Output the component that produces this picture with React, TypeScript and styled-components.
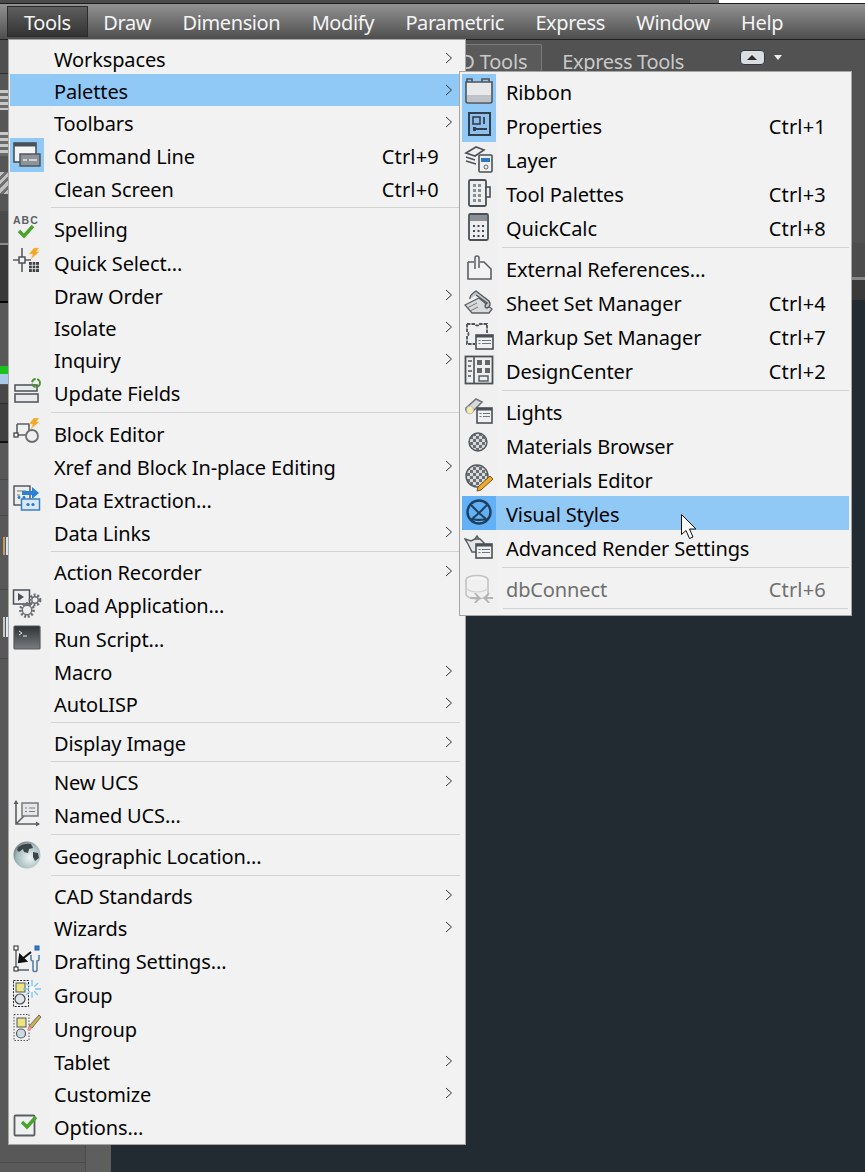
import React from 'react';
import styled, { createGlobalStyle } from 'styled-components';

const Global = createGlobalStyle`
  html, body { margin: 0; padding: 0; background: #222a32; }
  body { font-family: "Noto Sans", "Open Sans", sans-serif; overflow: hidden; }
`;

const Stroke = '#4b5056';

const Svg = ({ children }: { children: React.ReactNode }) => (
  <svg width="30" height="30" viewBox="0 0 30 30" fill="none">{children}</svg>
);

const ListBox = ({ x, y, w = 15, h = 12 }: { x: number; y: number; w?: number; h?: number }) => (
  <g>
    <rect x={x} y={y} width={w} height={h} fill="#eef0f2" stroke={Stroke} strokeWidth="1.6" />
    <rect x={x} y={y} width={w} height="2.5" fill={Stroke} />
    <path d={`M${x + 2.5} ${y + 5.5}h2M${x + 2.5} ${y + 8.5}h2M${x + 6} ${y + 5.5}h${w - 8}M${x + 6} ${y + 8.5}h${w - 8}`} stroke="#6f757b" strokeWidth="1.2" />
  </g>
);

const Bolt = ({ x, y }: { x: number; y: number }) => (
  <path transform={`translate(${x} ${y})`} d="M5 0h5L7 4h3L2 11l2-5H0z" fill="#f5a623" stroke="#f8c878" strokeWidth=".5" />
);

const Check = ({ x, y }: { x: number; y: number }) => (
  <path transform={`translate(${x} ${y})`} d="M1 6l5 5L15 1" stroke="#4aa32a" strokeWidth="3.4" strokeLinejoin="miter" />
);

const Checker = ({ id, cx, cy, r }: { id: string; cx: number; cy: number; r: number }) => (
  <g>
    <defs>
      <pattern id={id} width="6" height="6" patternUnits="userSpaceOnUse">
        <rect width="6" height="6" fill="#d8dadc" />
        <rect width="3" height="3" fill="#6a6f74" />
        <rect x="3" y="3" width="3" height="3" fill="#6a6f74" />
      </pattern>
    </defs>
    <circle cx={cx} cy={cy} r={r} fill={`url(#${id})`} stroke="#55595e" strokeWidth="1.4" />
  </g>
);

const Gear = ({ cx, cy, r }: { cx: number; cy: number; r: number }) => (
  <g>
    <circle cx={cx} cy={cy} r={r} stroke="#6b6f74" strokeWidth="2.8" strokeDasharray="2 1.6" />
    <circle cx={cx} cy={cy} r={r - 1.8} stroke="#6b6f74" strokeWidth="1.4" />
  </g>
);

const icons: Record<string, React.ReactNode> = {
  command: (
    <Svg>
      <rect x="2" y="3" width="22" height="19" fill="#f2f4f6" stroke={Stroke} strokeWidth="1.6" />
      <rect x="2" y="3" width="22" height="3.5" fill={Stroke} />
      <rect x="8" y="14" width="20" height="12" fill="#8d9399" stroke={Stroke} strokeWidth="1.4" />
      <path d="M11 20h4M17 20h8" stroke="#e8eaec" strokeWidth="1.6" />
    </Svg>
  ),
  spelling: (
    <Svg>
      <text x="1" y="11" fontFamily="Liberation Sans, sans-serif" fontWeight="700" fontSize="10.5" letterSpacing="1" fill="#5d6166">ABC</text>
      <Check x={6} y={12} />
    </Svg>
  ),
  quick: (
    <Svg>
      <path d="M10 1v24M1 13h18" stroke="#5a5e63" strokeWidth="1.6" />
      <rect x="7" y="10" width="6" height="6" fill="#f0f0f0" stroke="#44484c" strokeWidth="1.4" />
      <Bolt x={17} y={1} />
      <rect x="17" y="15" width="10" height="10" fill="#3d4044" />
      <path d="M20.3 15v10M23.6 15v10M17 18.3h10M17 21.6h10" stroke="#eee" strokeWidth=".8" />
    </Svg>
  ),
  update: (
    <Svg>
      <rect x="3" y="8" width="22" height="6" fill="#e8eaec" stroke="#55595e" strokeWidth="1.6" />
      <rect x="3" y="17" width="23" height="8" fill="#e8eaec" stroke="#55595e" strokeWidth="1.6" />
      <circle cx="24" cy="6" r="4" stroke="#46932e" strokeWidth="1.8" strokeDasharray="5 1.5" />
    </Svg>
  ),
  block: (
    <Svg>
      <path d="M5 6h12v11H4" stroke="#5a5e63" strokeWidth="1.6" />
      <path d="M5 6v10" stroke="#5a5e63" strokeWidth="1.6" />
      <rect x="2" y="15" width="4" height="4" fill="#fff" stroke="#333" strokeWidth="1.2" />
      <circle cx="20" cy="18" r="6" fill="#eee" stroke="#6b6f74" strokeWidth="1.8" />
      <Bolt x={17} y={0} />
    </Svg>
  ),
  extract: (
    <Svg>
      <rect x="2" y="2" width="16" height="19" fill="#eceef0" stroke={Stroke} strokeWidth="1.4" />
      <path d="M5 7h9M5 11h3" stroke="#9ba0a5" strokeWidth="1.6" />
      <circle cx="7" cy="13.5" r="1.4" fill="#2a78c8" /><circle cx="12" cy="13.5" r="1.4" fill="#2a78c8" />
      <path d="M10 7h10V3l7 6-7 6v-4H10z" fill="#2a82d8" />
      <rect x="9.5" y="15" width="18" height="11" fill="#d8e8f6" stroke="#3a80c4" strokeWidth="1.5" />
      <circle cx="16" cy="20.5" r="1.6" fill="#2a78c8" /><circle cx="21" cy="20.5" r="1.6" fill="#2a78c8" />
    </Svg>
  ),
  load: (
    <Svg>
      <rect x="1.500" y="1" width="16" height="14" fill="#eceef0" stroke={Stroke} strokeWidth="1.5" />
      <path d="M6 4l6 4-6 4z" fill={Stroke} />
      <Gear cx={23} cy={11} r={5} />
      <Gear cx={15} cy={21} r={6.500} />
    </Svg>
  ),
  script: (
    <svg width="30" height="30" viewBox="0 0 30 30" fill="none">
      <defs>
        <linearGradient id="termGrad" x1="0" y1="0" x2="0" y2="1">
          <stop offset="0" stopColor="#2e3134" /><stop offset="1" stopColor="#7a7d80" />
        </linearGradient>
      </defs>
      <rect x="2" y="3" width="26" height="23" rx="1" fill="url(#termGrad)" stroke="#54585c" strokeWidth="1.2" />
      <path d="M7 8l3 2-3 2M11 13h4" stroke="#e8e8e8" strokeWidth="1" />
    </svg>
  ),
  ucs: (
    <Svg>
      <path d="M4 2v23h23M4 25l8-8" stroke="#5a5e63" strokeWidth="1.6" />
      <path d="M1.5 5L4 1l2.5 4M24 22.500l4 2.500-4 2.500" fill="#5a5e63" />
      <rect x="10" y="4" width="16" height="13" fill="#e4e6e8" stroke="#75797e" strokeWidth="1.5" />
      <path d="M13 9h2M17 9h6M13 12.500h2M17 12.500h6" stroke="#7d8186" strokeWidth="1.2" />
    </Svg>
  ),
  globe: (
    <svg width="30" height="30" viewBox="0 0 30 30" fill="none">
      <defs>
        <radialGradient id="globeGrad" cx=".6" cy=".6" r=".7">
          <stop offset="0" stopColor="#eef5f5" /><stop offset=".7" stopColor="#a3b9bd" /><stop offset="1" stopColor="#5e6a6e" />
        </radialGradient>
      </defs>
      <circle cx="15" cy="15" r="13.500" fill="url(#globeGrad)" />
      <path d="M6 7c4-3 9-4 13-3l2 4-4 1-1 4-4-1-1-3-4 3-2-2zM21 12l5 1 1 5-4 3-2-4z" fill="#3c4548" />
    </svg>
  ),
  drafting: (
    <Svg>
      <path d="M4 3v22M4 25h13" stroke="#5a5e63" strokeWidth="1.4" />
      <rect x="2" y="1" width="4" height="4" fill="#fff" stroke="#333" strokeWidth="1.1" />
      <rect x="2" y="22" width="4" height="4" fill="#fff" stroke="#333" strokeWidth="1.1" />
      <path d="M19 7L9 15M7 17l1-7 6 6z" stroke="#111" strokeWidth="2" fill="#111" />
      <rect x="23" y="1" width="4" height="4" fill="#2a82d8" stroke="#1d5e9e" />
      <path d="M19 10v4c0 1 1 2 2 2v9c0 2 4 2 4 0v-9c1 0 2-1 2-2v-4" stroke="#5a82a8" strokeWidth="1.6" />
    </Svg>
  ),
  group: (
    <Svg>
      <rect x="1.500" y="1.500" width="15" height="26" stroke="#222" strokeWidth="1" strokeDasharray="2 1.300" />
      <rect x="4" y="4" width="9" height="9" fill="#ece47e" stroke="#55595e" />
      <circle cx="8" cy="20" r="5" fill="#dfe6ea" stroke="#44484c" strokeWidth="1.2" />
      <path d="M20 1v18M11 10h18M14 4l12 12M26 4L14 16" stroke="#7cc4f4" strokeWidth="1.3" />
      <circle cx="20" cy="10" r="3" fill="#fff" />
    </Svg>
  ),
  ungroup: (
    <Svg>
      <rect x="2" y="1.500" width="15" height="26" stroke="#555" strokeWidth="1" strokeDasharray="1.500 1.500" />
      <rect x="5" y="5" width="9" height="9" fill="#ece47e" stroke="#55595e" />
      <circle cx="9" cy="20.500" r="4.500" fill="#cfdbe2" stroke="#55595e" strokeWidth="1.2" />
      <path d="M27 2l2 2-9 11-3-2z" fill="#c9b14e" stroke="#55595e" strokeWidth=".8" />
      <path d="M17 13l3 2-2 3-3-1z" fill="#ef8f8f" />
    </Svg>
  ),
  options: (
    <Svg>
      <rect x="2.500" y="4.500" width="20" height="20" rx="1" fill="#eef0f2" stroke="#5a5e63" strokeWidth="1.800" />
      <Check x={9} y={5} />
    </Svg>
  ),
  ribbon: (
    <Svg>
      <path d="M2 6h26v19a2 2 0 0 1-2 2H4a2 2 0 0 1-2-2z" fill="#e6e8ea" stroke="#4d5358" strokeWidth="1.6" />
      <path d="M3 6V3h5v3M18 6V3h7v3" stroke="#4d5358" strokeWidth="1.600" />
      <rect x="3" y="19" width="24" height="7" fill="#bfc3c7" />
    </Svg>
  ),
  properties: (
    <Svg>
      <rect x="5" y="3" width="21" height="22" fill="#8fc0ec" stroke="#2f3f4e" strokeWidth="2" />
      <rect x="9" y="7" width="7" height="7" stroke="#2f3f4e" strokeWidth="1.6" />
      <path d="M20 7v7M9 19h14" stroke="#2f3f4e" strokeWidth="1.800" />
      <rect x="9" y="17" width="3" height="4" fill="#2f3f4e" />
    </Svg>
  ),
  layer: (
    <Svg>
      <path d="M2 9l10-6 8 3-9 6zM2 13l9 3M2 17l10 3" stroke="#4f5358" strokeWidth="1.600" />
      <rect x="15" y="11" width="13" height="17" rx="1" fill="#eef0f2" stroke={Stroke} strokeWidth="1.600" />
      <rect x="17" y="14" width="9" height="4" fill="#2a78c8" />
      <circle cx="22" cy="23" r="2" stroke="#666" />
    </Svg>
  ),
  tool: (
    <Svg>
      <rect x="5" y="2" width="17" height="26" rx="1.500" fill="#eceef0" stroke={Stroke} strokeWidth="1.800" />
      <path d="M9 6h3v3H9zM14 6h3v3h-3zM9 11h3v3H9zM14 11h3v3h-3zM9 16h3v3H9zM14 16h3v3h-3zM9 21h3v3H9zM14 21h3v3h-3z" fill="#8a8f94" />
      <rect x="22" y="9" width="4" height="10" fill="#eceef0" stroke={Stroke} strokeWidth="1.600" />
    </Svg>
  ),
  calc: (
    <Svg>
      <rect x="5" y="2" width="19" height="26" rx="1.500" fill="#eceef0" stroke={Stroke} strokeWidth="1.800" />
      <rect x="6" y="3" width="17" height="6" fill="#8b9095" />
      <path d="M9 13h2v2H9zM13.500 13h2v2h-2zM18 13h2v2h-2zM9 18h2v2H9zM13.500 18h2v2h-2zM18 18h2v2h-2zM9 23h2v2H9zM13.500 23h2v2h-2zM18 23h2v2h-2z" fill="#44484c" />
    </Svg>
  ),
  xref: (
    <Svg>
      <path d="M4 9h6M16 9l4 0 7 7v10H4V9" fill="#f2f2f2" stroke="#5a5e63" strokeWidth="1.600" />
      <path d="M11 16V5a2 2 0 0 1 4 0v10" stroke="#5a5e63" strokeWidth="1.500" />
    </Svg>
  ),
  sheet: (
    <Svg>
      <path d="M1 18l14-7 13 11-3 4H8z" fill="#d8dadc" stroke="#5a5e63" strokeWidth="1.300" />
      <path d="M6 12c-1-3 3-6 6-8l13 10c2 3 1 6-2 7-3 0-2-4 0-5L12 8" fill="#c4c7ca" stroke="#55595e" strokeWidth="1.400" />
      <path d="M3 21l10-5M6 24l8-4" stroke="#777" />
    </Svg>
  ),
  markup: (
    <Svg>
      <path d="M3 3h8c0 2 4 2 4 0h8v9M3 3v8c2 0 2 4 0 4v8h8" stroke="#4d5358" strokeWidth="1.800" strokeDasharray="3.500 1" />
      <ListBox x={12} y={14} w={17} h={14} />
    </Svg>
  ),
  design: (
    <Svg>
      <rect x="1.500" y="1.500" width="27" height="27" fill="#eceef0" stroke={Stroke} strokeWidth="1.800" />
      <path d="M10 2v26" stroke={Stroke} strokeWidth="1.600" />
      <path d="M4 6h4M4 11h3M4 16h4M4 21h3" stroke="#555" strokeWidth="1.400" />
      <rect x="13" y="5" width="5" height="5" fill="#666" /><rect x="21" y="5" width="5" height="5" fill="#666" />
      <rect x="13" y="13" width="5" height="5" fill="#666" /><rect x="21" y="13" width="5" height="5" fill="#666" />
      <rect x="15" y="21" width="9" height="5" stroke="#555" strokeWidth="1.400" />
    </Svg>
  ),
  lights: (
    <Svg>
      <path d="M2 12l10-9 6 3-11 11c-3 1-6-2-5-5z" fill="#d8dadc" stroke="#71767b" strokeWidth="1.600" />
      <ellipse cx="6" cy="14" rx="3.500" ry="4" fill="#f6edb6" stroke="#aaa" strokeWidth=".6" />
      <ListBox x={13} y={12} w={15} h={15} />
    </Svg>
  ),
  browser: (
    <Svg>
      <Checker id="chkBrowser" cx={14} cy={12} r={9} />
    </Svg>
  ),
  editor: (
    <Svg>
      <Checker id="chkEditor" cx={13} cy={12} r={11} />
      <path d="M26 12l3 3-12 11-4 1 1-4z" fill="#f1a92e" stroke="#7b5310" strokeWidth="1" />
    </Svg>
  ),
  visual: (
    <Svg>
      <circle cx="15" cy="14" r="11.500" stroke="#1f3f5e" strokeWidth="2.400" />
      <path d="M7 7l8 8 8-8M15 15l-7 6c4 1 10 1 14 0z" stroke="#1f3f5e" strokeWidth="2" />
    </Svg>
  ),
  render: (
    <Svg>
      <path d="M1 7l6 2 4-2h5l4 4-3 9H8L4 12z" fill="#e4e6e8" stroke="#55595e" strokeWidth="1.400" />
      <path d="M11 7l2-3 2 3" stroke="#55595e" strokeWidth="1.400" />
      <ListBox x={12} y={12} w={16} h={14} />
    </Svg>
  ),
  db: (
    <Svg>
      <ellipse cx="13" cy="7" rx="11" ry="4.500" fill="#f4f4f4" stroke="#c4c4c4" strokeWidth="1.600" />
      <path d="M2 7v14c0 3 6 5 11 5s11-2 11-5V7" fill="#f0f0f0" stroke="#c4c4c4" strokeWidth="1.600" />
      <path d="M2 14c0 3 6 5 11 5s11-2 11-5" stroke="#d0d0d0" strokeWidth="1.200" />
      <path d="M6 24h7l-3-4 2 0 5 5-5 5h-2l3-4H6zM29 24h-6l3-4h-2l-5 5 5 5h2l-3-4h6z" fill="#b4b4b4" />
    </Svg>
  ),
};

type Row = { label: string; key?: string; arrow?: boolean; icon?: string; hot?: boolean; lit?: 'soft' | 'strong' };
type Entry = Row | { sep: number };

const toolsMenu: Entry[] = [
  { label: 'Workspaces', arrow: true },
  { label: 'Palettes', arrow: true, hot: true },
  { label: 'Toolbars', arrow: true },
  { label: 'Command Line', key: 'Ctrl+9', icon: 'command', lit: 'soft' },
  { label: 'Clean Screen', key: 'Ctrl+0' },
  { sep: 7 },
  { label: 'Spelling', icon: 'spelling' },
  { label: 'Quick Select...', icon: 'quick' },
  { label: 'Draw Order', arrow: true },
  { label: 'Isolate', arrow: true },
  { label: 'Inquiry', arrow: true },
  { label: 'Update Fields', icon: 'update' },
  { sep: 7 },
  { label: 'Block Editor', icon: 'block' },
  { label: 'Xref and Block In-place Editing', arrow: true },
  { label: 'Data Extraction...', icon: 'extract' },
  { label: 'Data Links', arrow: true },
  { sep: 7 },
  { label: 'Action Recorder', arrow: true },
  { label: 'Load Application...', icon: 'load' },
  { label: 'Run Script...', icon: 'script' },
  { label: 'Macro', arrow: true },
  { label: 'AutoLISP', arrow: true },
  { sep: 7 },
  { label: 'Display Image', arrow: true },
  { sep: 7 },
  { label: 'New UCS', arrow: true },
  { label: 'Named UCS...', icon: 'ucs' },
  { sep: 7 },
  { label: 'Geographic Location...', icon: 'globe' },
  { sep: 7 },
  { label: 'CAD Standards', arrow: true },
  { label: 'Wizards', arrow: true },
  { label: 'Drafting Settings...', icon: 'drafting' },
  { label: 'Group', icon: 'group' },
  { label: 'Ungroup', icon: 'ungroup' },
  { label: 'Tablet', arrow: true },
  { label: 'Customize', arrow: true },
  { label: 'Options...', icon: 'options' },
];

const palettesMenu: Entry[] = [
  { label: 'Ribbon', icon: 'ribbon', lit: 'soft' },
  { label: 'Properties', key: 'Ctrl+1', icon: 'properties', lit: 'soft' },
  { label: 'Layer', icon: 'layer' },
  { label: 'Tool Palettes', key: 'Ctrl+3', icon: 'tool' },
  { label: 'QuickCalc', key: 'Ctrl+8', icon: 'calc' },
  { sep: 7 },
  { label: 'External References...', icon: 'xref' },
  { label: 'Sheet Set Manager', key: 'Ctrl+4', icon: 'sheet' },
  { label: 'Markup Set Manager', key: 'Ctrl+7', icon: 'markup' },
  { label: 'DesignCenter', key: 'Ctrl+2', icon: 'design' },
  { sep: 7 },
  { label: 'Lights', icon: 'lights' },
  { label: 'Materials Browser', icon: 'browser' },
  { label: 'Materials Editor', icon: 'editor' },
  { label: 'Visual Styles', icon: 'visual', hot: true, lit: 'strong' },
  { label: 'Advanced Render Settings', icon: 'render' },
  { sep: 7 },
  { label: 'dbConnect', key: 'Ctrl+6', icon: 'db' },
];

const leftBands: [number, string][] = [
  [33, '#4f4f4f'], [1, '#2e2e2e'], [137, '#565656'], [32, '#4a4a4a'], [2, '#8a8a8a'], [56, '#3a3a3a'],
  [2, '#050505'], [82, '#585858'], [18, '#484848'], [1, '#2f2f2f'], [37, '#404040'], [2, '#101010'],
  [36, '#585858'], [1, '#4a4a4a'], [35, '#585858'], [1, '#4a4a4a'], [73, '#585858'], [1, '#4a4a4a'], [68, '#585858'], [1, '#4a4a4a'],
];

const rightBands: [number, string][] = [[172, '#525252'], [34, '#4c4c4c'], [3, '#868686'], [45, '#3a3a3a'], [3, '#777777'], [3, '#050505']];

const Page = styled.div`
  position: relative;
  width: 865px;
  height: 1172px;
  overflow: hidden;
  display: flex;
  flex-direction: column;
  background: #222a32;
`;

const TopStrip = styled.div`
  height: 3px;
  flex: none;
  display: flex;
  border-bottom: 1px solid #1d1d1d;
`;

const TopSegment = styled.div<{ $w?: number; $c: string }>`
  width: ${(p) => (p.$w ? `${p.$w}px` : 'auto')};
  flex: ${(p) => (p.$w ? 'none' : 1)};
  background: ${(p) => p.$c};
`;

const MenuBar = styled.div`
  height: 36px;
  flex: none;
  display: flex;
  align-items: center;
  padding-left: 7px;
  box-sizing: border-box;
  background: linear-gradient(#929292, #4e4e4e);
  border-bottom: 1px solid #222;
`;

const BarItem = styled.div<{ $open?: boolean }>`
  height: 31px;
  display: flex;
  align-items: center;
  padding: 2px ${(p) => (p.$open ? 16 : 15.7)}px 0;
  box-sizing: border-box;
  font-size: 20px;
  letter-spacing: -0.4px;
  color: #f4f4f4;
  border: ${(p) => (p.$open ? '1px solid #2b2b2b' : 'none')};
  background: ${(p) => (p.$open ? 'linear-gradient(#5e5e5e, #333)' : 'none')};
`;

const Body = styled.div`
  flex: 1;
  display: flex;
  min-height: 0;
`;

const LeftColumn = styled.div`
  width: 111px;
  flex: none;
  display: flex;
  flex-direction: column;
  position: relative;
`;

const Band = styled.div<{ $h: number; $c: string }>`
  height: ${(p) => p.$h}px;
  flex: none;
  background: ${(p) => p.$c};
`;

const LeftBottom = styled.div`
  flex: 1;
  display: flex;
  background: #5e5e5e;
`;

const LeftBottomPane = styled.div`
  width: 86px;
  box-sizing: border-box;
  background: #585858;
  border-right: 1px solid #4b4b4b;
  display: flex;
  flex-direction: column;
  justify-content: flex-end;
`;

const PaneRule = styled.div`
  height: 9px;
  border-top: 1px solid #4b4b4b;
  background: #5a5a5a;
`;

const Peek = styled.div<{ $y: number; $h: number; $c: string }>`
  position: absolute;
  left: 0;
  top: ${(p) => p.$y}px;
  width: 8px;
  height: ${(p) => p.$h}px;
  background: ${(p) => p.$c};
`;

const MainColumn = styled.div`
  flex: 1;
  display: flex;
  flex-direction: column;
  min-width: 0;
`;

const Ribbon = styled.div`
  flex: none;
  height: 260px;
  display: flex;
  flex-direction: column;
  background: #525252;
`;

const TabRow = styled.div`
  display: flex;
  align-items: flex-end;
  height: 31px;
  padding-left: 327px;
  flex: none;
`;

const TabActive = styled.div`
  height: 27px;
  display: flex;
  align-items: center;
  padding: 7px 14px 0 10px;
  box-sizing: border-box;
  font-size: 20px;
  letter-spacing: -0.2px;
  color: #c9c9c9;
  background: #5a5a5a;
  border: 1px solid #7a7a7a;
  border-bottom: none;
  border-radius: 2px 2px 0 0;
`;

const Tab = styled.div`
  height: 27px;
  margin-left: 6px;
  display: flex;
  align-items: center;
  padding: 7px 14px 0;
  box-sizing: border-box;
  font-size: 20px;
  letter-spacing: -0.35px;
  color: #c9c9c9;
`;

const RibbonToggle = styled.div`
  margin: 0 0 6px 42px;
  width: 23px;
  height: 13px;
  border-radius: 4px;
  background: #d9dce0;
  border: 1px solid #30363e;
  display: flex;
  align-items: center;
  justify-content: center;
`;

const ToggleArrow = styled.div`
  width: 0;
  height: 0;
  border-left: 5px solid transparent;
  border-right: 5px solid transparent;
  border-bottom: 5px solid #2c2c2c;
`;

const CaretDown = styled.div`
  margin: 0 0 11px 9px;
  width: 0;
  height: 0;
  border-left: 4px solid transparent;
  border-right: 4px solid transparent;
  border-top: 5px solid #eee;
`;

const RibbonBody = styled.div`
  flex: 1;
  display: flex;
  flex-direction: column;
`;

const Canvas = styled.div`
  flex: 1;
  background: #222a32;
`;

const MenuPanel = styled.div<{ $left: number; $top: number; $w: number; $gutter: number }>`
  position: absolute;
  left: ${(p) => p.$left}px;
  top: ${(p) => p.$top}px;
  width: ${(p) => p.$w}px;
  box-sizing: border-box;
  padding: 2px 0 1px 1px;
  background: linear-gradient(90deg, #f0f0f0 ${(p) => p.$gutter}px, #f2f2f2 ${(p) => p.$gutter}px);
  border: 1px solid #a6a6a6;
  color: #050505;
  font-size: 20px;
  letter-spacing: -0.13px;
`;

const SubPanel = styled(MenuPanel)`
  padding: 2px 0 6px 2px;
`;

const RowBox = styled.div<{ $h: number; $hot?: boolean; $edge: number }>`
  height: ${(p) => p.$h}px;
  margin-right: ${(p) => p.$edge}px;
  display: flex;
  align-items: center;
  background: ${(p) => (p.$hot ? '#90c8f6' : 'transparent')};
`;

const IconCell = styled.div<{ $lit?: 'soft' | 'strong' }>`
  width: 34px;
  height: 100%;
  flex: none;
  display: flex;
  align-items: center;
  justify-content: center;
  background: ${(p) => (p.$lit === 'soft' ? '#90c8f6' : p.$lit === 'strong' ? '#62b0f5' : 'transparent')};
`;

const Label = styled.div<{ $off?: boolean }>`
  flex: 1;
  padding: 2px 0 0 10px;
  white-space: nowrap;
  color: ${(p) => (p.$off ? '#6f6f6f' : 'inherit')};
`;

const Shortcut = styled.div<{ $off?: boolean }>`
  padding-top: 2px;
  white-space: nowrap;
  letter-spacing: 0.2px;
  color: ${(p) => (p.$off ? '#6f6f6f' : 'inherit')};
`;

const Slot = styled.div<{ $w: number }>`
  width: ${(p) => p.$w}px;
  flex: none;
  display: flex;
  align-items: center;
  justify-content: flex-start;
  padding-left: 6px;
  box-sizing: border-box;
`;

const Divider = styled.div<{ $h: number; $from: number; $edge: number }>`
  height: ${(p) => p.$h}px;
  margin: 0 ${(p) => p.$edge}px 0 ${(p) => p.$from}px;
  display: flex;
  align-items: center;
  &::after {
    content: '';
    display: block;
    width: 100%;
    height: 1px;
    background: #d2d2d2;
  }
`;

const BottomRule = styled.div`
  height: 1px;
  margin: 3px 3px 0 41px;
  background: #d2d2d2;
`;

const Pointer = styled.svg`
  position: absolute;
  left: 680px;
  top: 513px;
`;

const Chevron = () => (
  <svg width="8" height="12" viewBox="0 0 8 12" fill="none">
    <path d="M1 1l5.500 5L1 11" stroke="#333" strokeWidth="1" />
  </svg>
);

const MenuRows = ({ entries, from, edge, slot, disabledFrom }: { entries: Entry[]; from: number; edge: number; slot: number; disabledFrom?: string }) => (
  <>
    {entries.map((e, i) => {
      if ('sep' in e) return <Divider key={i} $h={e.sep} $from={from} $edge={edge} />;
      const off = e.label === disabledFrom;
      return (
        <RowBox key={e.label} $h={e.icon ? 34 : 32} $hot={e.hot} $edge={edge}>
          <IconCell $lit={e.lit}>{e.icon ? icons[e.icon] : null}</IconCell>
          <Label $off={off}>{e.label}</Label>
          {e.key ? <Shortcut $off={off}>{e.key}</Shortcut> : null}
          <Slot $w={slot}>{e.arrow ? <Chevron /> : null}</Slot>
        </RowBox>
      );
    })}
  </>
);

export default function App() {
  return (
    <Page>
      <Global />
      <TopStrip>
        <TopSegment $w={690} $c="#4a4a4a" />
        <TopSegment $w={29} $c="#6a6a6a" />
        <TopSegment $c="#ffffff" />
      </TopStrip>
      <MenuBar>
        <BarItem $open>Tools</BarItem>
        {['Draw', 'Dimension', 'Modify', 'Parametric', 'Express', 'Window', 'Help'].map((m) => (
          <BarItem key={m}>{m}</BarItem>
        ))}
      </MenuBar>
      <Body>
        <LeftColumn>
          {leftBands.map(([h, c], i) => (
            <Band key={i} $h={h} $c={c} />
          ))}
          <LeftBottom>
            <LeftBottomPane>
              <PaneRule />
            </LeftBottomPane>
          </LeftBottom>
          <Peek $y={50} $h={20} $c="repeating-linear-gradient(#c8c8c8 0 3px, #6a6a6a 3px 6px)" />
          <Peek $y={92} $h={24} $c="repeating-linear-gradient(#c8c8c8 0 3px, #6a6a6a 3px 6px)" />
          <Peek $y={132} $h={22} $c="repeating-linear-gradient(135deg, #c0c0c0 0 3px, #707070 3px 6px)" />
          <Peek $y={326} $h={8} $c="#19c21f" />
          <Peek $y={334} $h={10} $c="#a9c9ea" />
          <Peek $y={497} $h={18} $c="linear-gradient(90deg, #585858 3px, #c89a5a 3px 5px, #585858 5px 6px, #cfe4f6 6px)" />
          <Peek $y={577} $h={20} $c="linear-gradient(90deg, #585858 3px, #c8c8c8 3px 5px, #585858 5px 6px, #dce8f2 6px)" />
        </LeftColumn>
        <MainColumn>
          <Ribbon>
            <TabRow>
              <TabActive>3D Tools</TabActive>
              <Tab>Express Tools</Tab>
              <RibbonToggle>
                <ToggleArrow />
              </RibbonToggle>
              <CaretDown />
            </TabRow>
            <RibbonBody>
              {rightBands.map(([h, c], i) => (
                <Band key={i} $h={h} $c={c} />
              ))}
            </RibbonBody>
          </Ribbon>
          <Canvas />
        </MainColumn>
      </Body>

      <MenuPanel $left={8} $top={39} $w={458} $gutter={42}>
        <MenuRows entries={toolsMenu} from={41} edge={5} slot={21} />
      </MenuPanel>

      <SubPanel $left={459} $top={71} $w={393} $gutter={38}>
        <MenuRows entries={palettesMenu} from={40} edge={2} slot={23} disabledFrom="dbConnect" />
        <BottomRule />
      </SubPanel>

      <Pointer width="20" height="28" viewBox="0 0 20 28">
        <path d="M1.500 1.500v20l4.500-4 3.500 8 3.500-1.500-3.500-8h6.500z" fill="#fff" stroke="#111" strokeWidth="1" />
      </Pointer>
    </Page>
  );
}
